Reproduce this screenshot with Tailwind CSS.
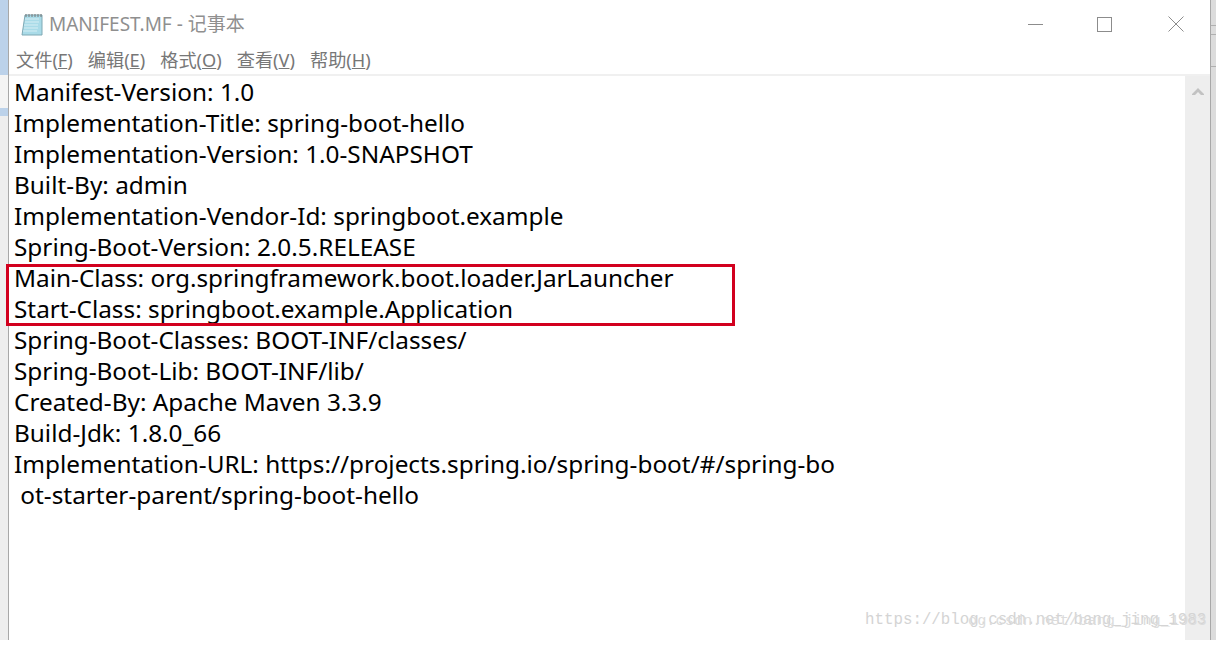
<!DOCTYPE html>
<html lang="zh">
  <head>
    <meta charset="UTF-8" />
    <title>MANIFEST.MF - 记事本</title>
    <script src="https://cdn.jsdelivr.net/npm/@tailwindcss/browser@4"></script>
  </head>
  <body class="h-[645px] w-[1219px] overflow-hidden bg-white font-['Noto_Sans','Noto_Sans_CJK_SC',sans-serif]">
    <div class="relative flex h-[645px] w-[1219px]">
      <!-- desktop behind the window -->
      <div class="flex h-[640px] w-[9px] shrink-0 flex-col border-r border-[#a8a8a8]">
        <div class="h-[75px] bg-[#bcd2ea]"></div>
        <div class="h-[33px] bg-[#f4f4f4]"></div>
        <div class="h-[8px] bg-[#bcd2ea]"></div>
        <div class="flex-1 bg-[#eeeeee]"></div>
      </div>

      <div class="flex h-[640px] w-[1201px] shrink-0 flex-col bg-white">
        <div class="flex h-[47px] shrink-0 items-center pl-[11px] pt-[1px]">
          <svg class="mr-[5px]" width="24" height="24" viewBox="0 0 24 24">
            <path d="M5 3h17v20H2z" fill="#a9dbe8" stroke="#7fa9b5" stroke-width="1" />
            <path d="M5 7h14M5 10h14M4 13h14M4 16h14M3 19h14" stroke="#d6eef4" stroke-width="1" />
            <path d="M6 2v3M9 2v3M12 2v3M15 2v3M18 2v3M21 2v3" stroke="#777777" stroke-width="1" />
          </svg>
          <span class="text-[19px] text-[#8f8f8f]">MANIFEST.MF - 记事本</span>
          <div class="ml-auto flex items-center pr-[26px]">
            <div class="mr-[54px] h-px w-[15px] bg-[#8c8c8c]"></div>
            <div class="mr-[56px] h-[15px] w-[15px] border border-[#8c8c8c]"></div>
            <svg width="16" height="16" viewBox="0 0 16 16"><path d="M0.5 0.5l15 15M15.5 0.5l-15 15" stroke="#8c8c8c" stroke-width="1" /></svg>
          </div>
        </div>
        <div class="flex h-[29px] shrink-0 items-start gap-[15px] border-b-2 border-[#f0f0f0] pl-[7px] text-[18.2px] leading-[26px] text-[#777777]">
          <span>文件(<u>F</u>)</span>
          <span>编辑(<u>E</u>)</span>
          <span>格式(<u>O</u>)</span>
          <span>查看(<u>V</u>)</span>
          <span>帮助(<u>H</u>)</span>
        </div>
        <div class="flex min-h-0 flex-1">
          <div class="relative flex-1 pl-[5px] text-[24.35px] leading-[31px] text-black">
            <div>Manifest-Version: 1.0</div>
            <div>Implementation-Title: spring-boot-hello</div>
            <div>Implementation-Version: 1.0-SNAPSHOT</div>
            <div>Built-By: admin</div>
            <div>Implementation-Vendor-Id: springboot.example</div>
            <div>Spring-Boot-Version: 2.0.5.RELEASE</div>
            <div>Main-Class: org.springframework.boot.loader.JarLauncher</div>
            <div>Start-Class: springboot.example.Application</div>
            <div>Spring-Boot-Classes: BOOT-INF/classes/</div>
            <div>Spring-Boot-Lib: BOOT-INF/lib/</div>
            <div>Created-By: Apache Maven 3.3.9</div>
            <div>Build-Jdk: 1.8.0_66</div>
            <div>Implementation-URL: https://projects.spring.io/spring-boot/#/spring-bo</div>
            <div class="whitespace-pre"> ot-starter-parent/spring-boot-hello</div>
            <div class="absolute left-[-3px] top-[188px] h-[62px] w-[729px] border-[3px] border-[#d2001e]"></div>
          </div>
          <div class="flex w-[25px] shrink-0 justify-center bg-[#eeeeee] pt-[11px]">
            <svg width="12" height="8" viewBox="0 0 12 8"><path d="M0 7l6-6 6 6v1H9L6 5 3 8H0z" fill="#c2c2c2" /></svg>
          </div>
        </div>
      </div>

      <!-- window behind, right side -->
      <div class="flex h-[640px] w-[6px] shrink-0 flex-col border-l border-[#a8a8a8] bg-[#dcdcdc]">
        <div class="h-[26px] border-b border-[#b0b0b0]"></div>
        <div class="h-[9px] border-b border-[#b0b0b0]"></div>
        <div class="h-[32px] border-b border-[#b0b0b0]"></div>
      </div>

      <!-- watermark -->
      <div class="absolute left-[865px] top-[609px] font-['Liberation_Mono',monospace] text-[15.8px] leading-[22px] text-[#d4d4d4]">https://blog.csdn.net/bang_jing_1983</div>
      <div class="absolute left-[968px] top-[611px] font-['Liberation_Mono',monospace] text-[15.3px] leading-[20px] text-[#dcdcdc]">og.csdn.net/bang_jing_1983</div>
    </div>
  </body>
</html>
